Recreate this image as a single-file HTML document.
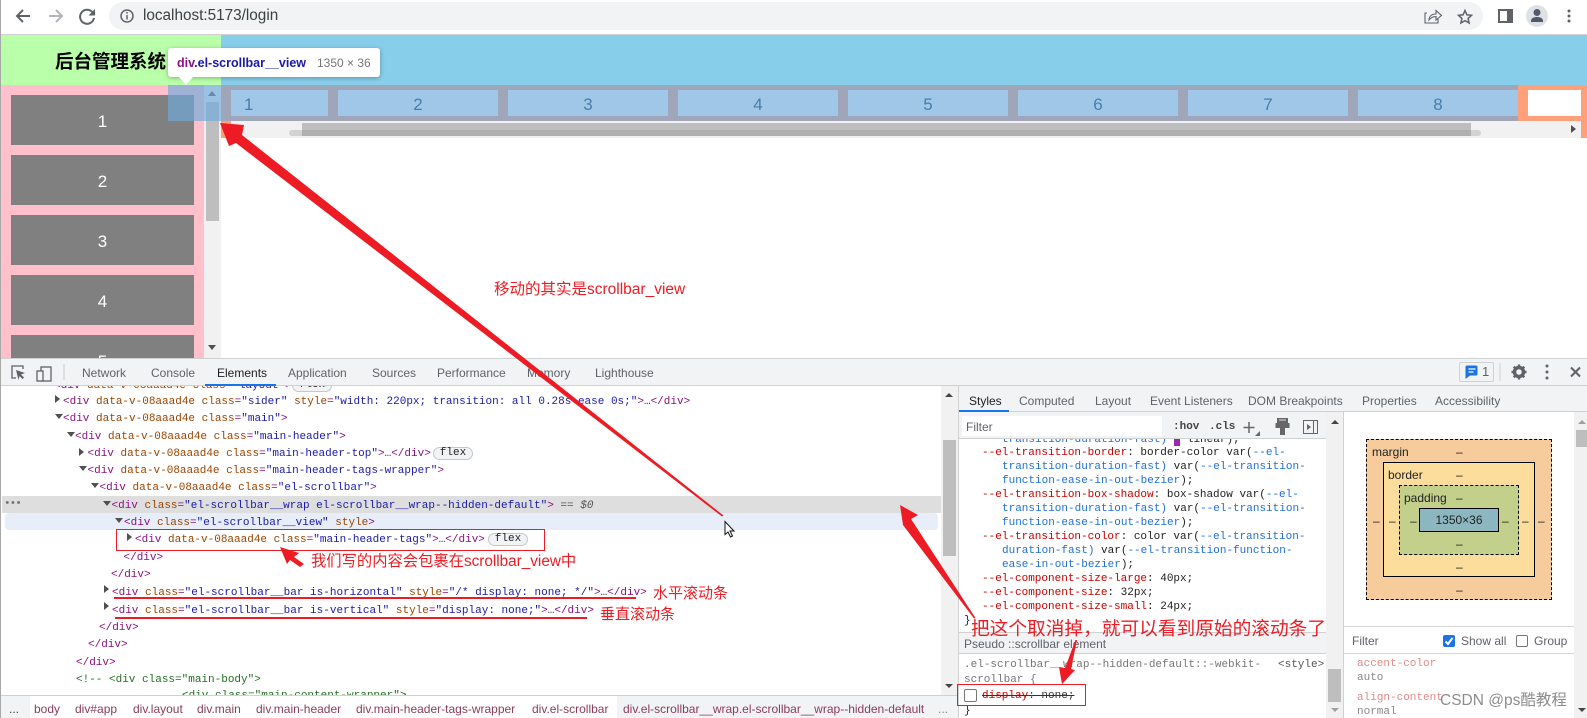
<!DOCTYPE html>
<html lang="zh"><head><meta charset="utf-8"><title>login</title>
<style>
html,body{margin:0;padding:0;background:#fff}
#p{position:relative;width:1587px;height:718px;overflow:hidden;background:#fff;font-family:"Liberation Sans","Noto Sans CJK SC",sans-serif}
#p div,#p span.abs{box-sizing:border-box}
.b{position:absolute}
.s{position:absolute;white-space:pre;font-size:12px;line-height:16px;color:#5f6368}
.m{position:absolute;white-space:pre;font:11px/16px "Liberation Mono",monospace;color:#881280;margin-top:1px}
.a{color:#994500}.v{color:#1a1aa6}.c{color:#236e25}.k{color:#c80000}.d{color:#222}.u{color:#1f6fd6}
.y{color:#333}
.tb{position:absolute;top:90px;height:26px;background:#fff;text-align:center;font-size:17px;line-height:29px;color:#00284b}
.it{position:absolute;left:11px;width:183px;height:50px;background:#808080;color:#fff;text-align:center;font-size:17px;line-height:54px}
.r{position:absolute;white-space:pre;color:#ed1c24;font-family:"Liberation Sans","Noto Sans CJK SC",sans-serif}
.tri{position:absolute;width:0;height:0}
.fx{position:absolute;width:40px;height:13px;border:1px solid #c4c7cc;border-radius:7px;background:#f1f3f4;color:#222;font:11px/11px "Liberation Mono",monospace;text-align:center}
.bc{position:absolute;top:701px;white-space:pre;font-size:12px;line-height:16px;color:#8a3d5c}
.bx{position:absolute;font-size:12px;line-height:14px;color:#222;white-space:pre}
svg{position:absolute;overflow:visible}
</style></head><body><div id="p">

<!-- browser toolbar -->
<div class="b" style="left:0;top:34px;width:1587px;height:1px;background:#d0d1d3"></div>
<div class="b" style="left:109px;top:2px;width:1374px;height:28px;border-radius:14px;background:#f1f3f4"></div>
<svg style="left:0;top:0" width="140" height="34" fill="none">
<path d="M30 16H17M23 10L17 16L23 22" stroke="#5f6368" stroke-width="2"/>
<path d="M49 16H62M56 10L62 16L56 22" stroke="#b4b6b9" stroke-width="2"/>
<path d="M93 13A7 7 0 1 0 94 18" stroke="#5f6368" stroke-width="2"/><path d="M95 9v6.500h-6.500z" fill="#5f6368"/>
<circle cx="127" cy="16" r="6" stroke="#5f6368" stroke-width="1.500"/><path d="M127 15v4.500M127 12v1.600" stroke="#5f6368" stroke-width="1.500"/>
</svg>
<div class="s" style="left:143px;top:7px;font-size:15.300px;line-height:18px;color:#3c4043">localhost:5173/login</div>
<svg style="left:1420px;top:4px" width="170" height="26" fill="none">
<path d="M7 9H5v10h13v-4" stroke="#5f6368" stroke-width="1.100"/><path d="M9 16c0-4 3-6 7-6V6.500l5.500 5-5.500 4.500v-3.500c-3 0-5 1-7 3.500z" stroke="#5f6368" stroke-width="1.100"/>
<path d="M45 6.500l1.900 4.300 4.600.5-3.400 3.100 1 4.600-4.100-2.400-4.100 2.400 1-4.600-3.400-3.100 4.600-.5z" stroke="#5f6368" stroke-width="1.500"/>
<rect x="79" y="6" width="13" height="12" stroke="#5f6368" stroke-width="2"/><rect x="87" y="5" width="6" height="14" fill="#5f6368"/>
<circle cx="117" cy="12" r="11" fill="#dfe1e5"/><circle cx="117" cy="8.500" r="3.500" fill="#4f5a6e"/><path d="M111 17c0-3 3-4 6-4s6 1 6 4v1h-12z" fill="#4f5a6e"/>
<circle cx="149" cy="7" r="1.500" fill="#5f6368"/><circle cx="149" cy="12" r="1.500" fill="#5f6368"/><circle cx="149" cy="17" r="1.500" fill="#5f6368"/>
</svg>

<!-- app page -->
<div class="b" style="left:1px;top:35px;width:220px;height:50px;background:#baffa9"></div>
<div class="b" style="left:221px;top:35px;width:1366px;height:50px;background:#87ceeb"></div>
<div class="b" style="left:55px;top:49px;font-size:18.500px;line-height:25px;font-weight:700;color:#000;white-space:pre">后台管理系统</div>

<div class="b" style="left:1px;top:85px;width:203px;height:273px;background:#ffc0cb"></div>
<div class="it" style="top:95px">1</div>
<div class="it" style="top:155px">2</div>
<div class="it" style="top:215px">3</div>
<div class="it" style="top:275px">4</div>
<div class="b" style="left:11px;top:335px;width:183px;height:23px;overflow:hidden"><div class="it" style="left:0;top:0">5</div></div>
<div class="b" style="left:204px;top:85px;width:17px;height:273px;background:#f1f1f1"></div>
<div class="b" style="left:206px;top:102px;width:13px;height:119px;background:#bebebe"></div>
<div class="tri" style="left:208px;top:91px;border:4.500px solid transparent;border-top:0;border-bottom:5px solid #505050"></div>
<div class="tri" style="left:208px;top:345px;border:4.500px solid transparent;border-bottom:0;border-top:5px solid #505050"></div>

<div class="b" style="left:221px;top:85px;width:1366px;height:36px;background:#ffa07a"></div>
<div class="b" style="left:221px;top:121px;width:10px;height:17px;background:#ffa07a"></div>
<div class="b" style="left:1581px;top:121px;width:6px;height:17px;background:#ffa07a"></div>
<div class="b" style="left:231px;top:121px;width:1350px;height:17px;background:#f1f1f1"></div>
<div class="b" style="left:289px;top:130px;width:1192px;height:6px;background:#d3d3d3;border-radius:3px"></div>
<div class="b" style="left:302px;top:123px;width:1169px;height:7px;background:#bebebe"></div>
<div class="b" style="left:302px;top:130px;width:1169px;height:6px;background:#b0b0b0"></div>
<div class="tri" style="left:236px;top:125px;border:4px solid transparent;border-left:0;border-right:5px solid #505050"></div>
<div class="tri" style="left:1571px;top:125px;border:4px solid transparent;border-right:0;border-left:5px solid #505050"></div>
<div class="tb" style="left:231px;width:97px;text-align:left;padding-left:13px">1</div>
<div class="tb" style="left:338px;width:160px">2</div>
<div class="tb" style="left:508px;width:160px">3</div>
<div class="tb" style="left:678px;width:160px">4</div>
<div class="tb" style="left:848px;width:160px">5</div>
<div class="tb" style="left:1018px;width:160px">6</div>
<div class="tb" style="left:1188px;width:160px">7</div>
<div class="tb" style="left:1358px;width:160px">8</div>
<div class="b" style="left:1528px;top:90px;width:53px;height:26px;background:#fff"></div>

<!-- element highlight overlay -->
<div class="b" style="left:168px;top:85px;width:1350px;height:36px;background:rgba(111,168,220,.66)"></div>
<div class="b" style="left:168px;top:48px;width:212px;height:29px;background:#fff;border-radius:3px;box-shadow:0 1px 5px rgba(0,0,0,.3)"></div>
<div class="tri" style="left:179px;top:77px;border:7px solid transparent;border-bottom:0;border-top:8px solid #fff"></div>
<div class="b" style="left:177px;top:55px;font-size:12.500px;line-height:16px;font-weight:700;white-space:pre;color:#1a1aa6"><span style="color:#881280">div</span>.el-scrollbar__view</div>
<div class="s" style="left:317px;top:55px;color:#777">1350 × 36</div>

<!-- devtools -->
<div class="b" style="left:0;top:358px;width:1587px;height:360px;background:#fff"></div>
<div class="b" style="left:0;top:358px;width:1587px;height:28px;background:#f1f3f4;border-top:1px solid #cfd1d3;border-bottom:1px solid #cfd1d3"></div>
<svg style="left:0;top:358px" width="70" height="28" fill="none">
<path d="M23 11V8H12v12h4" stroke="#5f6368" stroke-width="1.300"/><path d="M16 12l9 3-4 1.500 3 3-1.500 1.500-3-3-1 4z" fill="#5f6368"/>
<rect x="41" y="9" width="10" height="14" stroke="#5f6368" stroke-width="1.300"/><rect x="37" y="13" width="6" height="10" fill="#f1f3f4" stroke="#5f6368" stroke-width="1.300"/>
<path d="M64 6v16" stroke="#c8cacd"/>
</svg>
<div class="s" style="left:82px;top:365px">Network</div>
<div class="s" style="left:151px;top:365px">Console</div>
<div class="s" style="left:217px;top:365px;color:#202124">Elements</div>
<div class="s" style="left:288px;top:365px">Application</div>
<div class="s" style="left:372px;top:365px">Sources</div>
<div class="s" style="left:437px;top:365px">Performance</div>
<div class="s" style="left:527px;top:365px">Memory</div>
<div class="s" style="left:595px;top:365px">Lighthouse</div>
<div class="b" style="left:205px;top:384px;width:71px;height:2px;background:#1a73e8"></div>

<div class="b" style="left:1459px;top:362px;width:35px;height:20px;border:1px solid #cfd1d3;border-radius:2px"></div>
<svg style="left:1440px;top:358px" width="147" height="28" fill="none">
<path d="M27 7.500h9a1.500 1.500 0 0 1 1.500 1.500v7a1.500 1.500 0 0 1-1.500 1.500h-6l-4.500 3.500V9a1.500 1.500 0 0 1 1.500-1.500z" fill="#1a73e8"/><path d="M28.500 11h7M28.500 14h5" stroke="#fff" stroke-width="1.200"/>
<path d="M60 5v18" stroke="#cfd1d3"/>
<circle cx="79" cy="14" r="4.500" stroke="#5f6368" stroke-width="3.500"/><path d="M79 6.500v3M79 18.500v3M71.500 14h3M83.500 14h3M73.700 8.700l2 2M82.300 17.300l2 2M84.300 8.700l-2 2M75.700 17.300l-2 2" stroke="#5f6368" stroke-width="2.400"/>
<circle cx="107" cy="8" r="1.500" fill="#5f6368"/><circle cx="107" cy="14" r="1.500" fill="#5f6368"/><circle cx="107" cy="20" r="1.500" fill="#5f6368"/>
<path d="M131 9.500l9 9M140 9.500l-9 9" stroke="#5f6368" stroke-width="2"/>
</svg>
<div class="s" style="left:1482px;top:364px;font-size:13px">1</div>

<!-- DOM tree -->
<div class="b" style="left:0;top:386px;width:941px;height:309px;overflow:hidden">
<div class="b" style="left:2px;top:110px;width:939px;height:17px;background:#dedede"></div>
<div class="b" style="left:5px;top:127px;width:933px;height:17px;background:#e8eef9;border-radius:4px"></div>
<div class="m" style="left:4px;top:109px;color:#777;letter-spacing:-1px">•••</div>
<div class="m" style="left:54px;top:-9px">&lt;div <span class="a">data-v-08aaad4e class</span>=<span class="v">"layout"</span>&gt;</div>
<div class="m" style="left:63px;top:7px">&lt;div <span class="a">data-v-08aaad4e class</span>=<span class="v">"sider"</span> <span class="a">style</span>=<span class="v">"width: 220px; transition: all 0.28s ease 0s;"</span>&gt;<span class="y">…</span>&lt;/div&gt;</div>
<div class="m" style="left:63px;top:24px">&lt;div <span class="a">data-v-08aaad4e class</span>=<span class="v">"main"</span>&gt;</div>
<div class="m" style="left:75px;top:42px">&lt;div <span class="a">data-v-08aaad4e class</span>=<span class="v">"main-header"</span>&gt;</div>
<div class="m" style="left:87.500px;top:59px">&lt;div <span class="a">data-v-08aaad4e class</span>=<span class="v">"main-header-top"</span>&gt;<span class="y">…</span>&lt;/div&gt;</div>
<div class="m" style="left:87.500px;top:76px">&lt;div <span class="a">data-v-08aaad4e class</span>=<span class="v">"main-header-tags-wrapper"</span>&gt;</div>
<div class="m" style="left:99.500px;top:93px">&lt;div <span class="a">data-v-08aaad4e class</span>=<span class="v">"el-scrollbar"</span>&gt;</div>
<div class="m" style="left:111.500px;top:111px">&lt;div <span class="a">class</span>=<span class="v">"el-scrollbar__wrap el-scrollbar__wrap--hidden-default"</span>&gt; <span style="color:#555">== <i>$0</i></span></div>
<div class="m" style="left:124px;top:128px">&lt;div <span class="a">class</span>=<span class="v">"el-scrollbar__view"</span> <span class="a">style</span>&gt;</div>
<div class="m" style="left:135px;top:145px">&lt;div <span class="a">data-v-08aaad4e class</span>=<span class="v">"main-header-tags"</span>&gt;<span class="y">…</span>&lt;/div&gt;</div>
<div class="m" style="left:123.500px;top:163px">&lt;/div&gt;</div>
<div class="m" style="left:111px;top:180px">&lt;/div&gt;</div>
<div class="m" style="left:112px;top:198px">&lt;div <span class="a">class</span>=<span class="v">"el-scrollbar__bar is-horizontal"</span> <span class="a">style</span>=<span class="v">"/* display: none; */"</span>&gt;<span class="y">…</span>&lt;/div&gt;</div>
<div class="m" style="left:112px;top:216px">&lt;div <span class="a">class</span>=<span class="v">"el-scrollbar__bar is-vertical"</span> <span class="a">style</span>=<span class="v">"display: none;"</span>&gt;<span class="y">…</span>&lt;/div&gt;</div>
<div class="m" style="left:99px;top:233px">&lt;/div&gt;</div>
<div class="m" style="left:88px;top:250px">&lt;/div&gt;</div>
<div class="m" style="left:76px;top:268px">&lt;/div&gt;</div>
<div class="m c" style="left:76px;top:285px">&lt;!-- &lt;div class="main-body"&gt;</div>
<div class="m c" style="left:182px;top:301px">&lt;div class="main-content-wrapper"&gt;</div>
<div class="fx" style="left:292px;top:-7px">flex</div>
<div class="fx" style="left:433px;top:61px">flex</div>
<div class="fx" style="left:488px;top:147px">flex</div>
<svg style="left:0;top:0" width="160" height="309" fill="#505050">
<path d="M55 9l5 4-5 4z"/><path d="M55 28h8l-4 5z"/><path d="M67 46h8l-4 5z"/><path d="M79 62l5 4-5 4z"/><path d="M79 80h8l-4 5z"/><path d="M91 97h8l-4 5z"/><path d="M103 115h8l-4 5z"/><path d="M115 132h8l-4 5z"/><path d="M127 147l5 4-5 4z"/><path d="M104 199l5 4-5 4z"/><path d="M104 216l5 4-5 4z"/>
</svg>
</div>
<div class="b" style="left:941px;top:386px;width:17px;height:309px;background:#f1f1f1"></div>
<div class="b" style="left:943px;top:440px;width:13px;height:116px;background:#bebebe"></div>
<div class="tri" style="left:945px;top:393px;border:4px solid transparent;border-top:0;border-bottom:4px solid #444"></div>
<div class="tri" style="left:945px;top:684px;border:4px solid transparent;border-bottom:0;border-top:4px solid #444"></div>

<!-- breadcrumb -->
<div class="b" style="left:0;top:695px;width:958px;height:23px;background:#fff;border-top:1px solid #cfd1d3"></div>
<div class="b" style="left:0;top:696px;width:30px;height:22px;background:#f1f3f4"></div>
<div class="b" style="left:617px;top:696px;width:312px;height:22px;background:#f1f3f4"></div>
<div class="b" style="left:929px;top:696px;width:29px;height:22px;background:#f1f3f4"></div>
<div class="bc" style="left:9px;color:#444">...</div>
<div class="bc" style="left:34px">body</div>
<div class="bc" style="left:75px">div#app</div>
<div class="bc" style="left:133px">div.layout</div>
<div class="bc" style="left:197px">div.main</div>
<div class="bc" style="left:256px">div.main-header</div>
<div class="bc" style="left:356px">div.main-header-tags-wrapper</div>
<div class="bc" style="left:532px">div.el-scrollbar</div>
<div class="bc" style="left:623px">div.el-scrollbar__wrap.el-scrollbar__wrap--hidden-default</div>
<div class="bc" style="left:938px;color:#888">...</div>

<!-- styles panel -->
<div class="b" style="left:958px;top:386px;width:1px;height:332px;background:#cfd1d3"></div>
<div class="b" style="left:959px;top:386px;width:628px;height:26px;background:#f1f3f4;border-bottom:1px solid #cfd1d3"></div>
<div class="b" style="left:959px;top:410px;width:50px;height:2px;background:#1a73e8"></div>
<div class="s" style="left:969px;top:393px;color:#202124">Styles</div>
<div class="s" style="left:1019px;top:393px">Computed</div>
<div class="s" style="left:1095px;top:393px">Layout</div>
<div class="s" style="left:1150px;top:393px">Event Listeners</div>
<div class="s" style="left:1248px;top:393px">DOM Breakpoints</div>
<div class="s" style="left:1362px;top:393px">Properties</div>
<div class="s" style="left:1435px;top:393px">Accessibility</div>

<div class="b" style="left:959px;top:412px;width:367px;height:27px;background:#f1f3f4;border-bottom:1px solid #cfd1d3"></div>
<div class="b" style="left:962px;top:416px;width:200px;height:20px;background:#fff"></div>
<div class="s" style="left:966px;top:419px">Filter</div>
<div class="m" style="left:1173px;top:418px;color:#444;font-weight:700">:hov</div>
<div class="m" style="left:1209px;top:418px;color:#444;font-weight:700">.cls</div>
<svg style="left:1240px;top:414px" width="85" height="25" fill="none">
<path d="M9 8v11M3.500 13.500h11" stroke="#666" stroke-width="1.500"/><path d="M20 22v-5l-5 5z" fill="#666"/>
<path d="M37 4h11v7h-11z" fill="#666"/><path d="M35.500 9h14v5h-14z" fill="#666"/><path d="M40 14h5v7h-5z" fill="#666"/><path d="M39 6h7" stroke="#ddd"/>
<rect x="63.500" y="6.500" width="14" height="13" stroke="#666"/><path d="M73.500 7v12" stroke="#666"/><path d="M67 10l4 3-4 3z" fill="#666"/>
</svg>

<div class="b" style="left:959px;top:439px;width:367px;height:279px;overflow:hidden">
<div class="m d" style="left:43px;top:-8px"><span class="u">transition-duration-fast)</span> <span style="background:#9c27b0;color:#9c27b0">■</span> linear);</div>
<div class="m d" style="left:23px;top:5px"><span class="k">--el-transition-border</span>: border-color var(<span class="u">--el-</span></div>
<div class="m u" style="left:43px;top:19px">transition-duration-fast)<span class="d"> var(</span>--el-transition-</div>
<div class="m d" style="left:43px;top:33px"><span class="u">function-ease-in-out-bezier</span>);</div>
<div class="m d" style="left:23px;top:47px"><span class="k">--el-transition-box-shadow</span>: box-shadow var(<span class="u">--el-</span></div>
<div class="m u" style="left:43px;top:61px">transition-duration-fast)<span class="d"> var(</span>--el-transition-</div>
<div class="m d" style="left:43px;top:75px"><span class="u">function-ease-in-out-bezier</span>);</div>
<div class="m d" style="left:23px;top:89px"><span class="k">--el-transition-color</span>: color var(<span class="u">--el-transition-</span></div>
<div class="m u" style="left:43px;top:103px">duration-fast)<span class="d"> var(</span>--el-transition-function-</div>
<div class="m d" style="left:43px;top:117px"><span class="u">ease-in-out-bezier</span>);</div>
<div class="m d" style="left:23px;top:131px"><span class="k">--el-component-size-large</span>: 40px;</div>
<div class="m d" style="left:23px;top:145px"><span class="k">--el-component-size</span>: 32px;</div>
<div class="m d" style="left:23px;top:159px"><span class="k">--el-component-size-small</span>: 24px;</div>
<div class="m d" style="left:5px;top:173px">}</div>
<div class="b" style="left:0;top:193px;width:367px;height:22px;background:#f1f3f4;border-top:1px solid #cfd1d3;border-bottom:1px solid #cfd1d3"></div>
<div class="s" style="left:5px;top:197px">Pseudo ::scrollbar element</div>
<div class="m" style="left:5px;top:217px;color:#777">.el-scrollbar__wrap--hidden-default::-webkit-</div>
<div class="m" style="left:5px;top:232px;color:#777">scrollbar {</div>
<div class="m" style="left:319px;top:217px;color:#555">&lt;style&gt;</div>
<div class="b" style="left:5px;top:250px;width:13px;height:13px;border:1px solid #767676;border-radius:2px;background:#fff"></div>
<div class="m" style="left:23px;top:248px;color:#333;text-decoration:line-through"><span class="k">display</span>: none;</div>
<div class="m d" style="left:5px;top:263px">}</div>
</div>

<div class="b" style="left:1326px;top:412px;width:18px;height:306px;background:#f1f1f1;border-right:1px solid #cfd1d3"></div>
<div class="b" style="left:1328px;top:669px;width:13px;height:33px;background:#bebebe"></div>
<div class="tri" style="left:1331px;top:420px;border:4px solid transparent;border-top:0;border-bottom:4px solid #444"></div>
<div class="tri" style="left:1331px;top:708px;border:4px solid transparent;border-bottom:0;border-top:4px solid #a0a0a0"></div>

<!-- box model -->
<div class="b" style="left:1366px;top:439px;width:186px;height:161px;background:#f7cc9c;border:1px dashed #000"></div>
<div class="b" style="left:1383px;top:462px;width:152px;height:115px;background:#fddd9b;border:1px solid #000"></div>
<div class="b" style="left:1399px;top:485px;width:120px;height:70px;background:#c3d08b;border:1px dashed #000"></div>
<div class="b" style="left:1419px;top:508px;width:80px;height:24px;background:#8cb6c0;border:1px solid #000"></div>
<div class="bx" style="left:1372px;top:445px">margin</div>
<div class="bx" style="left:1388px;top:468px">border</div>
<div class="bx" style="left:1404px;top:491px">padding</div>
<div class="bx" style="left:1419px;top:513px;width:80px;text-align:center">1350×36</div>
<div class="bx" style="left:1456px;top:445px">–</div><div class="bx" style="left:1456px;top:468px">–</div><div class="bx" style="left:1456px;top:491px">–</div>
<div class="bx" style="left:1456px;top:537px">–</div><div class="bx" style="left:1456px;top:560px">–</div><div class="bx" style="left:1456px;top:583px">–</div>
<div class="bx" style="left:1373px;top:514px">–</div><div class="bx" style="left:1389px;top:514px">–</div><div class="bx" style="left:1410px;top:514px">–</div>
<div class="bx" style="left:1502px;top:514px">–</div><div class="bx" style="left:1522px;top:514px">–</div><div class="bx" style="left:1538px;top:514px">–</div>

<div class="b" style="left:1344px;top:626px;width:230px;height:1px;background:#d5d6d8"></div>
<div class="b" style="left:1344px;top:653px;width:230px;height:1px;background:#d5d6d8"></div>
<div class="s" style="left:1352px;top:633px">Filter</div>
<div class="b" style="left:1443px;top:635px;width:12px;height:12px;background:#1a73e8;border-radius:2px"></div>
<svg style="left:1443px;top:635px" width="12" height="12" fill="none"><path d="M2.500 6.500l2.500 2.500 4.500-6" stroke="#fff" stroke-width="2"/></svg>
<div class="s" style="left:1461px;top:633px">Show all</div>
<div class="b" style="left:1516px;top:635px;width:12px;height:12px;border:1px solid #767676;border-radius:2px"></div>
<div class="s" style="left:1534px;top:633px">Group</div>
<div class="m" style="left:1357px;top:655px;color:#e08a8a">accent-color</div>
<div class="m" style="left:1357px;top:669px;color:#888">auto</div>
<div class="m" style="left:1357px;top:689px;color:#e08a8a">align-content</div>
<div class="m" style="left:1357px;top:703px;color:#888">normal</div>
<div class="b" style="left:1574px;top:412px;width:13px;height:306px;background:#f1f1f1"></div>
<div class="b" style="left:1576px;top:430px;width:11px;height:17px;background:#bebebe"></div>
<div class="tri" style="left:1578px;top:420px;border:4px solid transparent;border-top:0;border-bottom:4px solid #a0a0a0"></div>
<div class="tri" style="left:1578px;top:708px;border:4px solid transparent;border-bottom:0;border-top:4px solid #444"></div>
<div class="b" style="left:1440px;top:691px;font-size:15.500px;line-height:20px;color:rgba(120,120,120,.85);white-space:pre">CSDN @ps酷教程</div>

<!-- cursor -->
<svg style="left:724px;top:521px" width="14" height="18"><path d="M1 .5v13l3-2.500 2.500 5 2-1-2.500-5h4z" fill="#fff" stroke="#111"/></svg>

<!-- left edge -->
<div class="b" style="left:0;top:0;width:1px;height:718px;background:#a8a8a8"></div>

<!-- annotations -->
<svg style="left:0;top:0;z-index:5" width="1587" height="718" fill="#ed1c24">
<path d="M220 123L244 125L242 135L723.500 515.500L722 516.500L236 143L229 146z"/>
<path d="M900 505L918 515L911 519L975.500 618L974 618.500L903 525z"/>
<path d="M1077 640L1071 669L1075 670L1062 684L1059 667L1065 668L1075.500 640z"/>
<path d="M280 547L299 553L294 557L304 564L300 567L290 560L287 564z"/>
</svg>
<div class="b" style="left:116px;top:529px;width:429px;height:22px;border:1px solid #ed1c24;z-index:5"></div>
<div class="b" style="left:957px;top:684px;width:129px;height:22px;border:1px solid #ed1c24;z-index:5"></div>
<div class="b" style="left:114px;top:597px;width:522px;height:2px;background:#ed1c24;z-index:5"></div>
<div class="b" style="left:115px;top:617px;width:472px;height:2px;background:#ed1c24;z-index:5"></div>
<div class="r" style="left:494px;top:280px;font-size:15.500px;line-height:20px;z-index:6">移动的其实是scrollbar_view</div>
<div class="r" style="left:311px;top:552px;font-size:15.300px;line-height:20px;z-index:6">我们写的内容会包裹在scrollbar_view中</div>
<div class="r" style="left:653px;top:584px;font-size:15px;line-height:20px;z-index:6">水平滚动条</div>
<div class="r" style="left:600px;top:605px;font-size:15px;line-height:20px;z-index:6">垂直滚动条</div>
<div class="r" style="left:971px;top:616px;font-size:18.700px;line-height:26px;z-index:6">把这个取消掉，就可以看到原始的滚动条了</div>
</div></body></html>
